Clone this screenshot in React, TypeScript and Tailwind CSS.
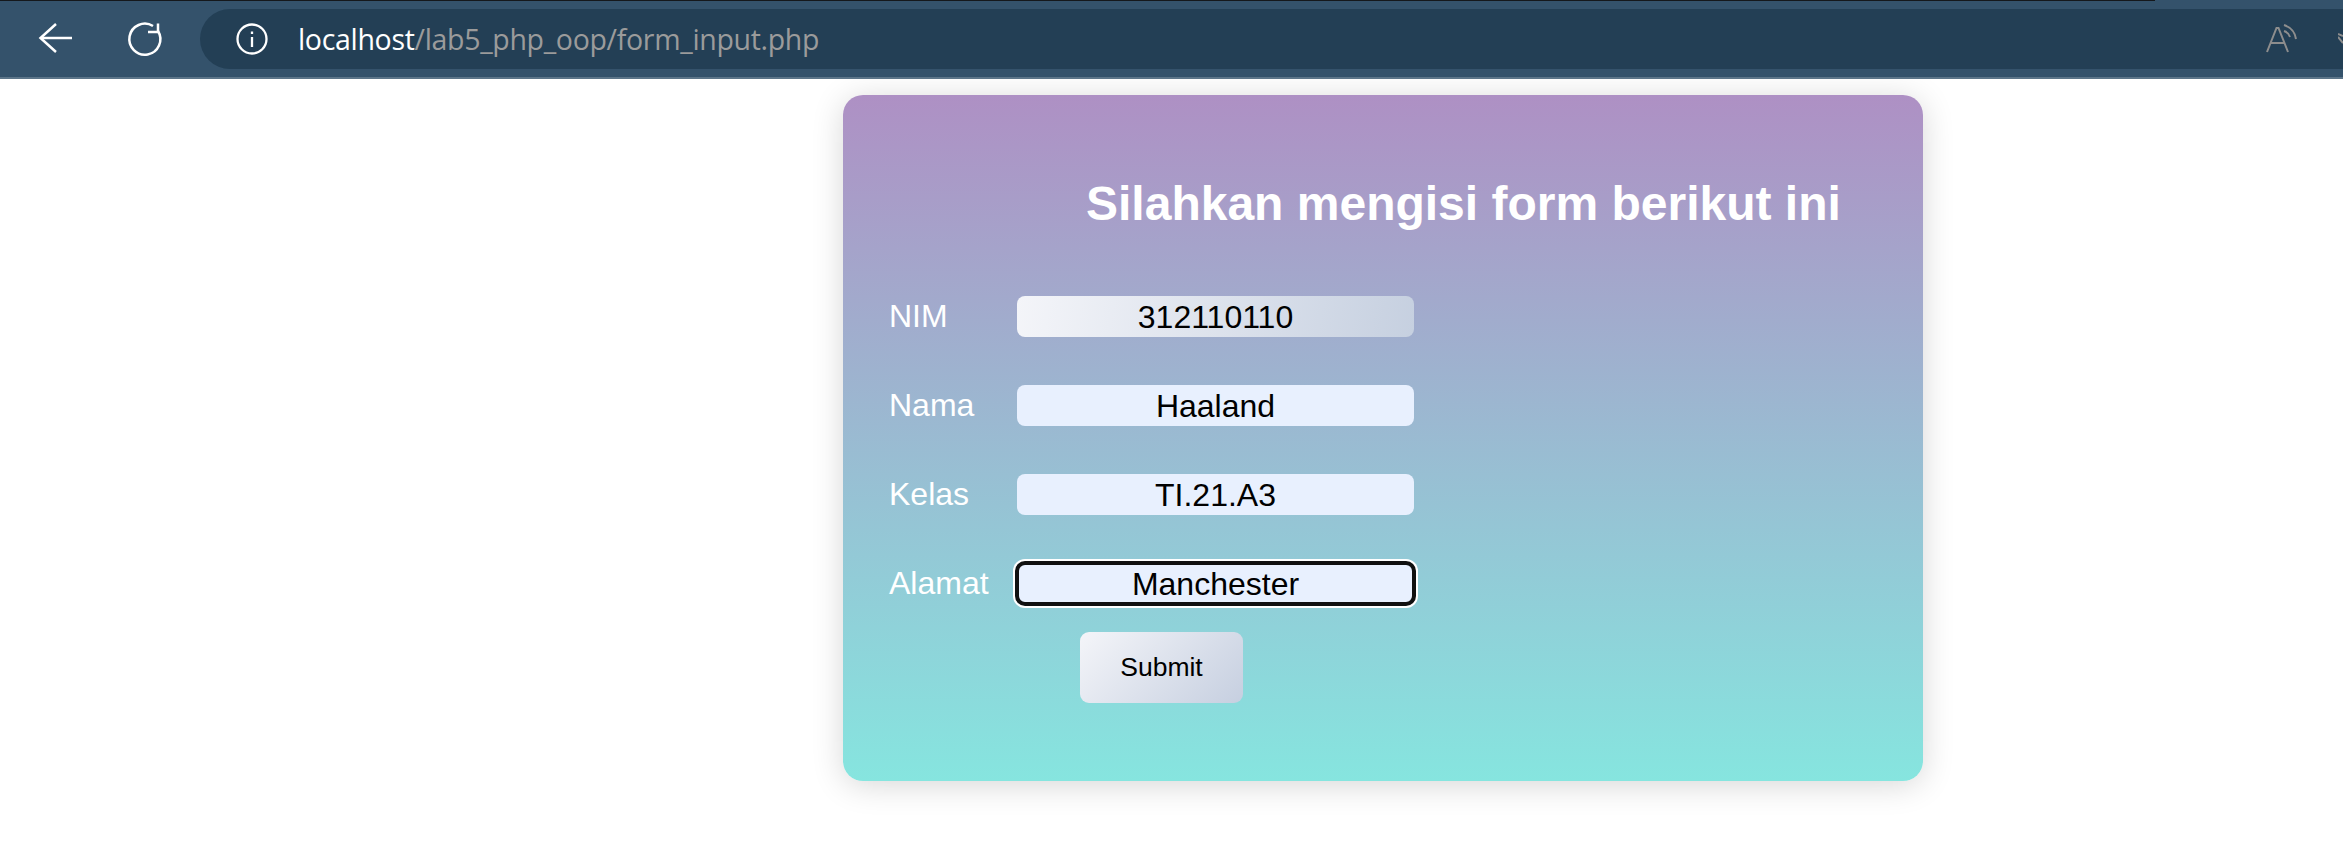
const fields = [
  { label: "NIM", value: "312110110", className: "bg-[linear-gradient(100deg,#f4f5f9,#c6d0e0)]" },
  { label: "Nama", value: "Haaland", className: "bg-[#e8f0fe]" },
  { label: "Kelas", value: "TI.21.A3", className: "bg-[#e8f0fe]" },
  {
    label: "Alamat",
    value: "Manchester",
    className: "bg-[#e8f0fe] outline-[4px] outline-[#101010] outline-offset-[-2px] shadow-[0_0_0_4px_#ffffff]",
  },
];

const Toolbar = () => (
  <div className="relative flex h-[79px] items-center border-b-[2px] border-[#5c7589] bg-[#34526b] pt-[1px]">
    <div className="absolute top-0 left-0 h-[1px] w-[2155px] bg-[#15181c]" />
    <svg width="200" height="76" viewBox="0 0 200 76" fill="none" stroke="#ffffff" strokeWidth="2.5" className="shrink-0 self-start">
      <path d="M72 37H41" />
      <path d="M56 23 40.500 37 56 51" />
      <path d="M158 30A15.500 15.500 0 1 1 153 25" />
      <path d="M158 22.500V31H148" />
    </svg>
    <div className="flex h-[60px] min-w-0 flex-1 items-center overflow-hidden rounded-l-[30px] bg-[#233f55]">
      <svg width="32" height="32" viewBox="0 0 32 32" fill="none" stroke="#ffffff" strokeWidth="2.300" className="ml-9 shrink-0">
        <circle cx="16" cy="16" r="14.500" />
        <path d="M16 14v10" />
        <path d="M16 8.500v2.500" />
      </svg>
      <div className="ml-[30px] font-['Open_Sans',sans-serif] text-[28.500px] tracking-[-0.32px] whitespace-nowrap text-[#9b9b9b]">
        <span className="text-white">localhost</span>/lab5_php_oop/form_input.php
      </div>
      <svg width="32" height="30" viewBox="0 0 32 30" fill="none" stroke="#8d8d8d" strokeWidth="2" className="mr-[40px] ml-auto shrink-0">
        <path d="M1 28 10.500 4h2l9.500 24" />
        <path d="M5 19h13.500" />
        <path d="M18 1c6 2 11 7 12 14" />
        <path d="M18 7c3 1 5 3 6 6" />
      </svg>
      <svg width="5" height="12" viewBox="0 0 5 12" fill="none" stroke="#8d8d8d" strokeWidth="2" className="shrink-0">
        <path d="M0 1 5 3M0 4l5 6" />
      </svg>
    </div>
  </div>
);

export default function App() {
  return (
    <div className="min-h-screen bg-white font-['Liberation_Sans',Arial,sans-serif]">
      <Toolbar />
      <div className="mt-[16px] ml-[843px] h-[686px] w-[1080px] rounded-[20px] bg-[linear-gradient(180deg,#ae90c4,#86e5df)] pt-[81px] pl-[46px] shadow-[0_4px_32px_rgba(0,0,0,0.16)]">
        <h1 className="ml-[197px] text-[48px] leading-[56px] font-bold whitespace-nowrap text-white">
          Silahkan mengisi form berikut ini
        </h1>
        <div className="mt-[64px] flex flex-col gap-[48px]">
          {fields.map((field) => (
            <div key={field.label} className="flex items-center">
              <label className="w-[128px] text-[32px] leading-[41px] text-white">{field.label}</label>
              <input
                readOnly
                value={field.value}
                className={`h-[41px] w-[397px] rounded-[8px] text-center text-[32px] text-black ${field.className}`}
              />
            </div>
          ))}
        </div>
        <button className="mt-[28px] ml-[191px] h-[71px] w-[163px] rounded-[9px] bg-[linear-gradient(135deg,#f4f5f9,#c6cfe0)] text-[26.500px] text-black">
          Submit
        </button>
      </div>
    </div>
  );
}
